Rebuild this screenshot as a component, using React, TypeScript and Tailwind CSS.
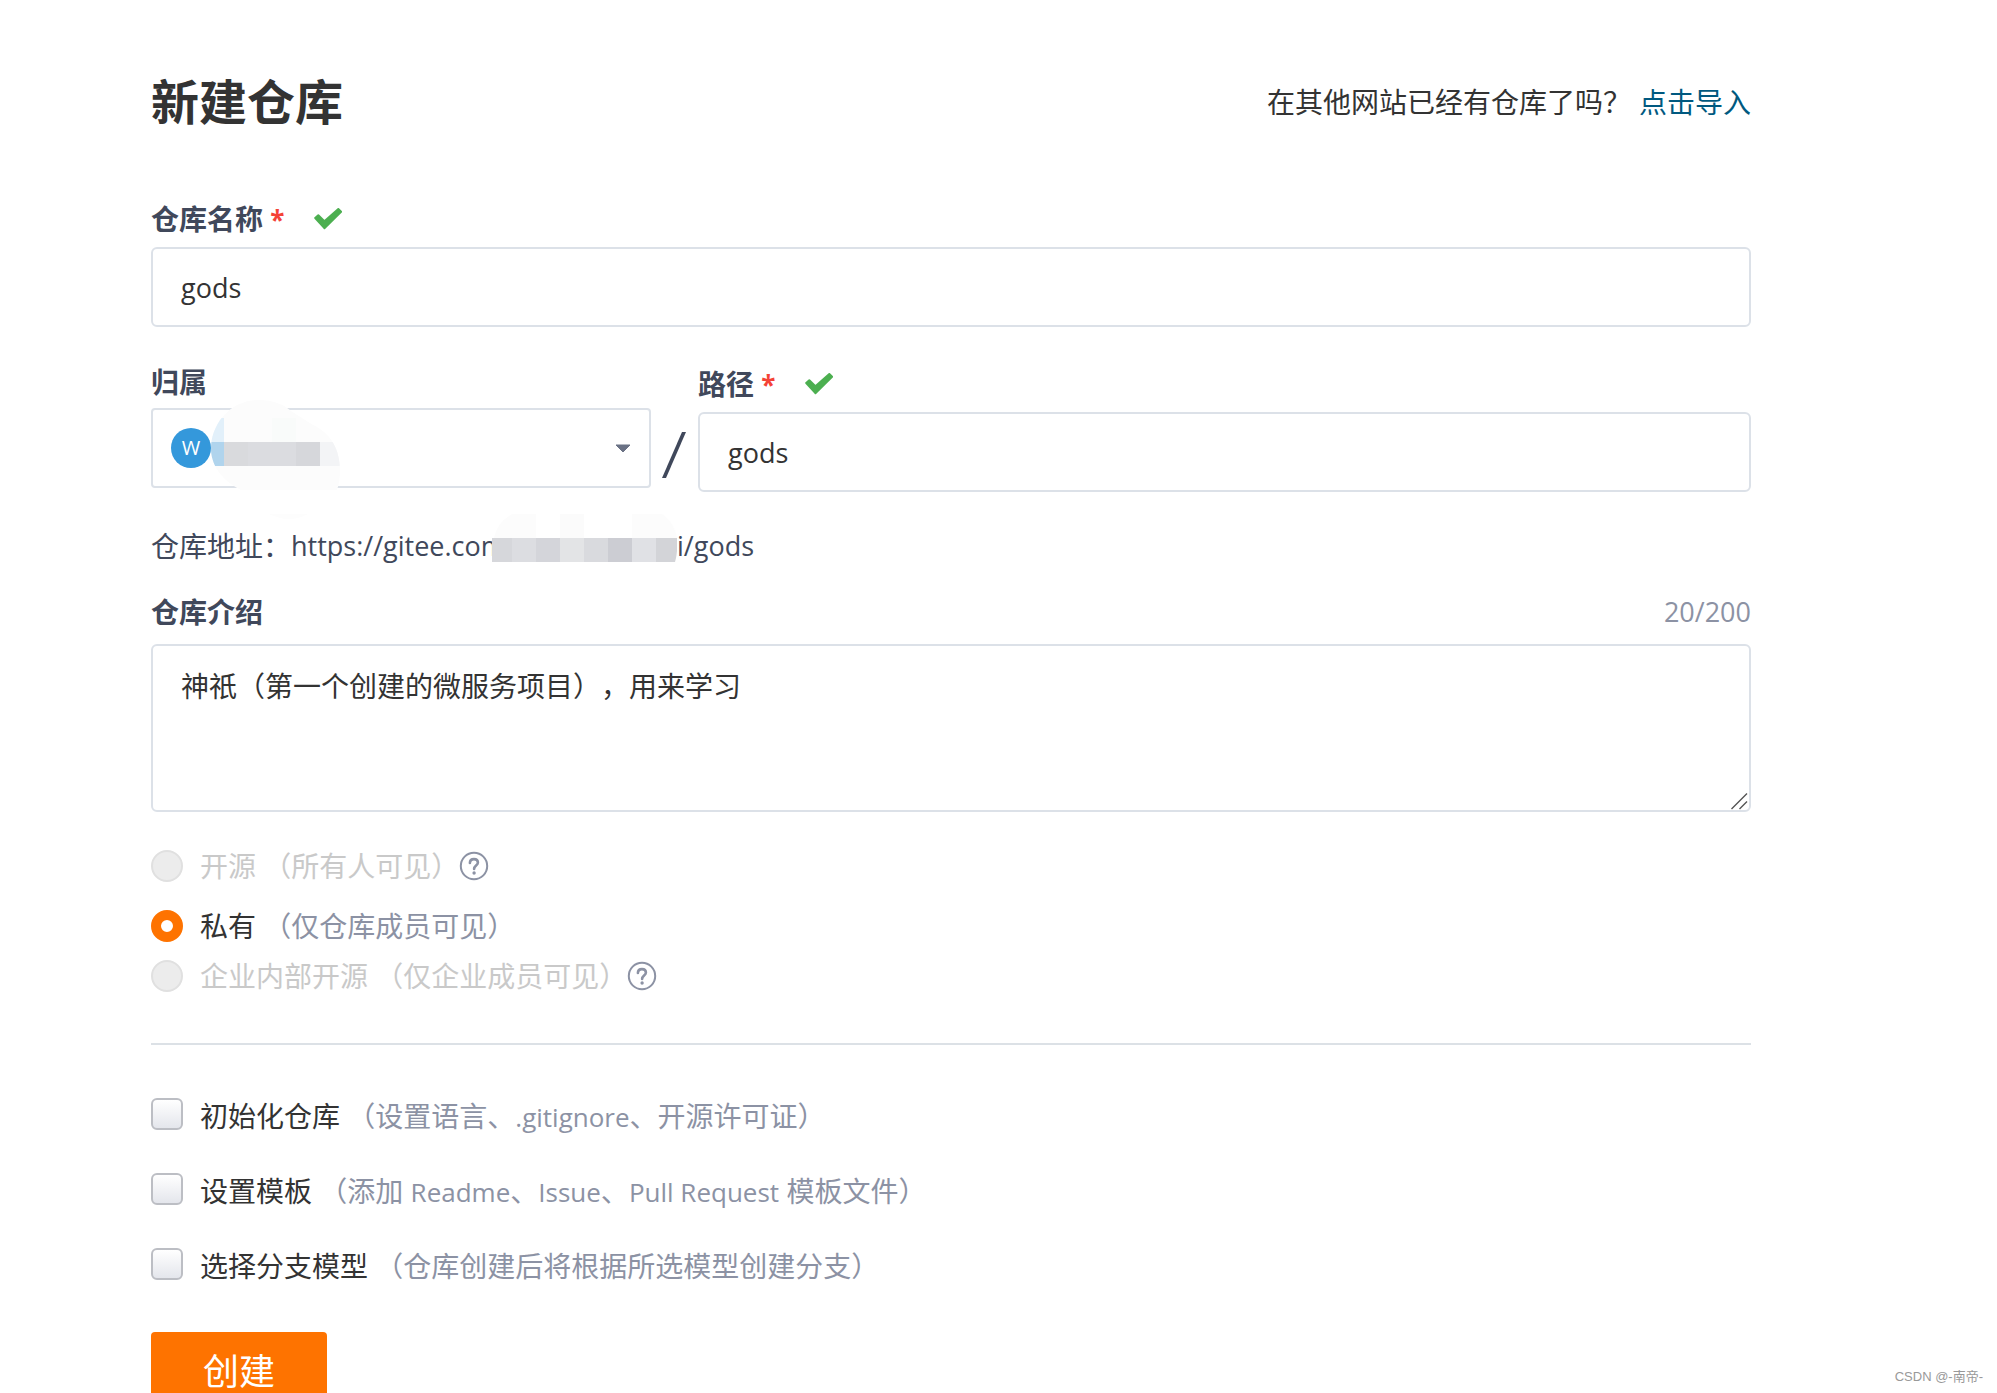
import { useState } from "react";

const CheckMark = () => (
  <svg width="28" height="22" viewBox="0 0 28 22" aria-hidden="true">
    <path
      d="M1.2 10.1 L4.3 7.2 L10.4 13.3 L24.3 1 L27.1 3.8 L10.4 20.2 Z"
      fill="#4caf50"
      stroke="#4caf50"
      strokeWidth="2"
      strokeLinejoin="round"
    />
  </svg>
);

const HelpIcon = () => (
  <svg
    width="30"
    height="30"
    viewBox="0 0 30 30"
    fill="none"
    stroke="#8c92a4"
    aria-hidden="true"
  >
    <circle cx="15" cy="15" r="13.2" strokeWidth="2" />
    <path
      d="M10.9 12 C10.9 9.4 12.6 8.1 15 8.1 C17.3 8.1 18.9 9.5 18.9 11.6 C18.9 14.4 15.1 14.8 15.1 18"
      strokeWidth="2.6"
      strokeLinecap="round"
    />
    <circle cx="15.1" cy="22" r="1.7" fill="#8c92a4" stroke="none" />
  </svg>
);

// Hides the owner name in the drop-down
const OwnerMask = () => (
  <svg
    className="absolute left-[60px] -top-[8px] pointer-events-none"
    width="132"
    height="122"
    viewBox="0 0 132 122"
    aria-hidden="true"
  >
    <clipPath id="owner-blob">
      <path d="M0 46 C2 20 22 0 48 0 C62 0 72 4 80 11 L102 25 C120 33 129 50 129 70 C129 78 128 84 126 90 L30 90 C10 80 -1 64 0 46 Z" />
    </clipPath>
    <g clipPath="url(#owner-blob)">
      <rect width="132" height="90" fill="#fcfcfc" />
      <rect y="18" width="13" height="24" fill="#e2f0fa" />
      <rect x="61" y="18" width="24" height="24" fill="#f9fbfa" />
      <rect y="42" width="13" height="24" fill="#b0d4ed" />
      <rect x="13" y="42" width="24" height="24" fill="#d9dadd" />
      <rect x="37" y="42" width="48" height="24" fill="#dbdce0" />
      <rect x="85" y="42" width="24" height="24" fill="#d6d7db" />
      <rect x="109" y="42" width="23" height="24" fill="#f3f4f6" />
    </g>
    <path d="M58 114 H97 Q78 124 58 114 Z" fill="#fdfdfd" />
  </svg>
);

// Hides the user part of the address
const PathMask = () => (
  <svg
    className="relative shrink-0"
    width="185"
    height="48"
    viewBox="0 0 185 48"
    aria-hidden="true"
  >
    <path d="M2 24 Q5 8 20 0 H44 V24 Z" fill="#fcfcfc" />
    <rect x="68" width="24" height="24" fill="#fbfbfb" />
    <path d="M140 0 H170 Q182 8 185 24 H140 Z" fill="#fcfcfc" />
    <rect y="24" width="20" height="24" fill="#d6d7db" />
    <rect x="20" y="24" width="24" height="24" fill="#dcdde1" />
    <rect x="44" y="24" width="24" height="24" fill="#d4d5da" />
    <rect x="68" y="24" width="24" height="24" fill="#e3e4e6" />
    <rect x="92" y="24" width="24" height="24" fill="#d9dade" />
    <rect x="116" y="24" width="24" height="24" fill="#cccdd3" />
    <rect x="140" y="24" width="24" height="24" fill="#e0e1e5" />
    <path d="M164 24 H185 Q186 38 183 48 H164 Z" fill="#d3d4d8" />
  </svg>
);

const visibilities = [
  { id: "public", name: "开源", hint: "（所有人可见）", disabled: true, help: true },
  { id: "private", name: "私有", hint: "（仅仓库成员可见）", disabled: false, help: false },
  { id: "inner", name: "企业内部开源", hint: "（仅企业成员可见）", disabled: true, help: true },
];

const Latin = ({ children }: { children: string }) => (
  <span className="text-[26px]">{children}</span>
);

const options = [
  {
    id: "init",
    name: "初始化仓库",
    hint: (
      <>
        （设置语言、<Latin>.gitignore</Latin>、开源许可证）
      </>
    ),
  },
  {
    id: "template",
    name: "设置模板",
    hint: (
      <>
        （添加 <Latin>Readme</Latin>、<Latin>Issue</Latin>、<Latin>Pull Request</Latin> 模板文件）
      </>
    ),
  },
  { id: "branch", name: "选择分支模型", hint: "（仓库创建后将根据所选模型创建分支）" },
];

const App = () => {
  const [name, setName] = useState("gods");
  const [path, setPath] = useState("gods");
  const [intro, setIntro] = useState("神祇（第一个创建的微服务项目），用来学习");
  const [visibility, setVisibility] = useState("private");

  return (
    <div
      lang="zh-CN"
      className="relative h-screen overflow-hidden bg-white pl-[151px] pr-[246px] pt-[70px] font-['Open_Sans','Noto_Sans_CJK_SC',sans-serif] text-[28px] leading-8 text-[#40485b] [text-spacing-trim:space-all]"
    >
      <header className="flex items-center justify-between">
        <h1 className="text-5xl leading-16 font-bold text-[#333]">新建仓库</h1>
        <p className="text-[#333]">
          在其他网站已经有仓库了吗？
          <a href="#import" className="ml-2 text-[#005980]">
            点击导入
          </a>
        </p>
      </header>

      <form className="mt-[69px]" onSubmit={(e) => e.preventDefault()}>
        <div className="flex h-8 items-center">
          <label htmlFor="name" className="font-bold">
            仓库名称 <span className="text-[26px] leading-none text-[#f44336]">*</span>
          </label>
          <span className="ml-[30px]">
            <CheckMark />
          </span>
        </div>
        <input
          id="name"
          value={name}
          onChange={(e) => setName(e.target.value)}
          className="mt-3 block h-20 w-full rounded-md border-2 border-[#dce1e8] px-7 text-[27px] text-[#333] outline-none"
        />

        <div className="mt-[39px] flex">
          <div className="w-[500px] shrink-0">
            <label htmlFor="owner" className="block font-bold">
              归属
            </label>
            <div className="relative mt-[10px]">
              <select
                id="owner"
                className="block h-20 w-full appearance-none rounded border-2 border-[#dce1e8] bg-white pl-16 outline-none"
              >
                <option></option>
              </select>
              <span className="pointer-events-none absolute left-5 top-5 flex size-10 items-center justify-center rounded-full bg-[#3498db] text-xl text-white">
                W
              </span>
              <svg
                className="pointer-events-none absolute right-5 top-9"
                width="16"
                height="9"
                viewBox="0 0 16 9"
                aria-hidden="true"
              >
                <path d="M1 1 H15 L8 8 Z" fill="#6b7285" stroke="#6b7285" strokeLinejoin="round" />
              </svg>
              <OwnerMask />
            </div>
          </div>
          <svg className="mx-[10px] mt-[66px] shrink-0" width="27" height="48" viewBox="0 0 27 48" aria-hidden="true">
            <path d="M21 0 H25 L5 46 H1 Z" fill="#40485b" />
          </svg>
          <div className="flex-1 pt-[2px]">
            <div className="flex h-8 items-center">
              <label htmlFor="path" className="font-bold">
                路径 <span className="text-[26px] leading-none text-[#f44336]">*</span>
              </label>
              <span className="ml-[30px]">
                <CheckMark />
              </span>
            </div>
            <input
              id="path"
              value={path}
              onChange={(e) => setPath(e.target.value)}
              className="mt-3 block h-20 w-full rounded-md border-2 border-[#dce1e8] px-7 text-[27px] text-[#333] outline-none"
            />
          </div>
        </div>

        <div className="mt-[22px] flex h-12 items-end">
          <span>仓库地址：</span>
          <span className="w-[201px] shrink-0 whitespace-nowrap text-[27px]">https://gitee.com</span>
          <PathMask />
          <span className="text-[27px]">i/gods</span>
        </div>

        <div className="mt-[34px] flex justify-between">
          <label htmlFor="intro" className="font-bold">
            仓库介绍
          </label>
          <span className="text-[27px] text-[#8c92a4]">{intro.length}/200</span>
        </div>
        <div className="relative mt-4">
          <textarea
            id="intro"
            value={intro}
            onChange={(e) => setIntro(e.target.value)}
            className="block h-[168px] w-full resize-none rounded-md border-2 border-[#dce1e8] px-7 py-6 text-[#333] outline-none"
          />
          <svg
            className="pointer-events-none absolute bottom-[2px] right-[3px]"
            width="17"
            height="17"
            viewBox="0 0 17 17"
            stroke="#555"
            strokeWidth="1.4"
            aria-hidden="true"
          >
            <path d="M0.5 16 L16 0.5 M8.5 16 L16 8.5" />
          </svg>
        </div>

        <fieldset className="mt-[38px]">
          {visibilities.map((v) => (
            <div key={v.id} className="flex items-center first:mb-7 last:mt-[18px]">
              <input
                type="radio"
                id={v.id}
                name="visibility"
                checked={visibility === v.id}
                disabled={v.disabled}
                onChange={() => setVisibility(v.id)}
                className="size-8 shrink-0 appearance-none rounded-full border-2 border-[#e0e0e0] bg-[#ececec] checked:border-10 checked:border-[#fe7300] checked:bg-white"
              />
              <label
                htmlFor={v.id}
                className={v.disabled ? "ml-[17px] text-[#c9c9c9]" : "ml-[17px] text-[#333]"}
              >
                {v.name}{" "}
                <span className={v.disabled ? "text-[#c9c9c9]" : "text-[#8c92a4]"}>{v.hint}</span>
              </label>
              {v.help && <HelpIcon />}
            </div>
          ))}
        </fieldset>

        <hr className="mt-[51px] border-t-2 border-[#dce1e6]" />

        <div className="mt-[53px] flex flex-col gap-[43px]">
          {options.map((o) => (
            <div key={o.id} className="flex h-8 items-start">
              <input
                type="checkbox"
                id={o.id}
                className="size-8 shrink-0 appearance-none rounded-md border-2 border-[#bcbec4] bg-linear-to-b from-white to-[#e4e6ec]"
              />
              <label htmlFor={o.id} className="ml-[17px] leading-9 text-[#333]">
                {o.name} <span className="text-[#8c92a4]">{o.hint}</span>
              </label>
            </div>
          ))}
        </div>

        <button
          type="submit"
          className="mt-[52px] block h-20 w-44 rounded bg-[#fe7300] text-4xl text-white"
        >
          创建
        </button>
      </form>

      <div className="absolute bottom-1 right-[14px] font-['Liberation_Sans','Noto_Sans_CJK_SC',sans-serif] text-[13px] leading-6 text-[#999]">
        CSDN @-南帝-
      </div>
    </div>
  );
};

export default App;
